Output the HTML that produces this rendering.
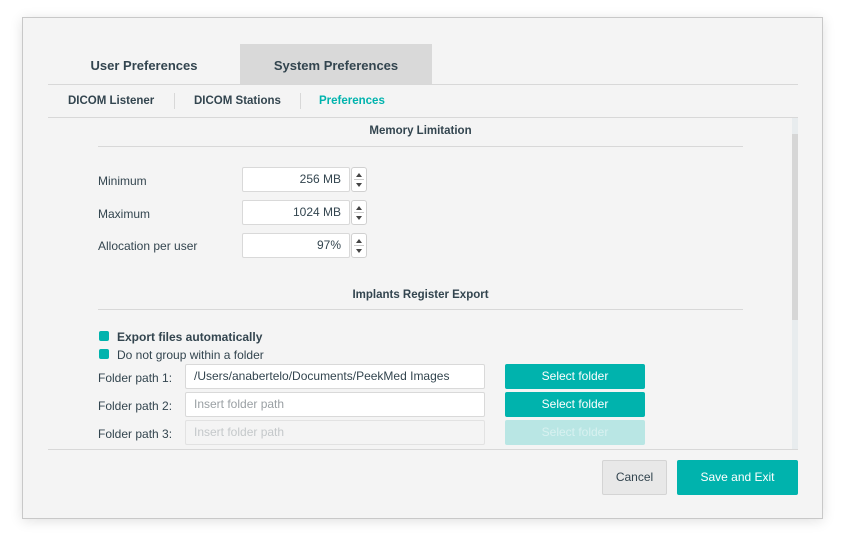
<!DOCTYPE html>
<html><head><meta charset="utf-8"><style>
*{box-sizing:border-box;margin:0;padding:0}
body{width:846px;height:546px;background:#fff;font-family:"Liberation Sans",sans-serif;color:#33454f;position:relative;overflow:hidden}
.dlg{position:absolute;left:22px;top:17px;width:801px;height:502px;background:#f4f4f4;border:1px solid #c8c8c8;box-shadow:0 2px 12px rgba(0,0,0,.12)}
.a{position:absolute}
.b{font-weight:bold}
.t{font-size:12px}
.hl{position:absolute;height:1px;background:#d8d8d8}
.inp{position:absolute;background:#fff;border:1px solid #d9d9d9;border-radius:2px;font-size:12px;height:25px;line-height:23px}
.num{text-align:right;padding-right:8px;width:108px}
.spin{position:absolute;width:16px;height:25px;background:#fff;border:1px solid #d0d0d0;border-radius:3px}
.spin:before{content:"";position:absolute;left:4px;top:5px;border:3px solid transparent;border-bottom:4px solid #444;border-top:0}
.spin:after{content:"";position:absolute;left:4px;top:15px;border:3px solid transparent;border-top:4px solid #444;border-bottom:0}
.spin i{position:absolute;left:2px;right:2px;top:11px;height:1px;background:#ccc}
.btn{position:absolute;background:#00b3ad;color:#fff;font-size:12px;text-align:center;border-radius:2px}
.cb{position:absolute;width:10px;height:10px;background:#00b3ad;border-radius:2px}
</style></head><body>
<div class="dlg">
  <div class="a" style="left:217px;top:26px;width:192px;height:41px;background:#d9d9d9"></div>
  <div class="a b" style="left:25px;top:40px;width:192px;text-align:center;font-size:13px">User Preferences</div>
  <div class="a b" style="left:217px;top:40px;width:192px;text-align:center;font-size:13px">System Preferences</div>
  <div class="hl" style="left:25px;top:66px;width:750px"></div>
  <div class="a b t" style="left:45px;top:77px;font-size:11.5px">DICOM Listener</div>
  <div class="a" style="left:151px;top:75px;width:1px;height:16px;background:#d8d8d8"></div>
  <div class="a b t" style="left:171px;top:77px;font-size:11.5px">DICOM Stations</div>
  <div class="a" style="left:277px;top:75px;width:1px;height:16px;background:#d8d8d8"></div>
  <div class="a b t" style="left:296px;top:77px;font-size:11.5px;color:#00b3ad">Preferences</div>
  <div class="hl" style="left:25px;top:99px;width:750px"></div>

  <div class="a" style="left:769px;top:100px;width:6px;height:331px;background:#e8ecee"></div>
  <div class="a" style="left:769px;top:116px;width:6px;height:186px;background:#d6d6d6"></div>

  <div class="a b t" style="left:75px;top:107px;width:645px;text-align:center;font-size:11.5px">Memory Limitation</div>
  <div class="hl" style="left:75px;top:128px;width:645px"></div>

  <div class="a t" style="left:75px;top:156px">Minimum</div>
  <div class="inp num" style="left:219px;top:149px">256 MB</div><div class="spin" style="left:328px;top:149px"><i></i></div>
  <div class="a t" style="left:75px;top:189px">Maximum</div>
  <div class="inp num" style="left:219px;top:182px">1024 MB</div><div class="spin" style="left:328px;top:182px"><i></i></div>
  <div class="a t" style="left:75px;top:221px">Allocation per user</div>
  <div class="inp num" style="left:219px;top:215px">97%</div><div class="spin" style="left:328px;top:215px"><i></i></div>

  <div class="a b t" style="left:75px;top:271px;width:645px;text-align:center;font-size:11.5px">Implants Register Export</div>
  <div class="hl" style="left:75px;top:291px;width:645px"></div>

  <div class="cb" style="left:76px;top:313px"></div>
  <div class="a b t" style="left:94px;top:312px">Export files automatically</div>
  <div class="cb" style="left:76px;top:331px"></div>
  <div class="a t" style="left:94px;top:330px">Do not group within a folder</div>

  <div class="a t" style="left:75px;top:353px">Folder path 1:</div>
  <div class="inp" style="left:162px;top:346px;width:300px;padding-left:8px">/Users/anabertelo/Documents/PeekMed Images</div>
  <div class="btn" style="left:482px;top:346px;width:140px;height:25px;line-height:25px">Select folder</div>
  <div class="a t" style="left:75px;top:381px">Folder path 2:</div>
  <div class="inp" style="left:162px;top:374px;width:300px;padding-left:8px;color:#9aa0a4">Insert folder path</div>
  <div class="btn" style="left:482px;top:374px;width:140px;height:25px;line-height:25px">Select folder</div>
  <div class="a t" style="left:75px;top:409px">Folder path 3:</div>
  <div class="inp" style="left:162px;top:402px;width:300px;padding-left:8px;color:#c4c8ca;background:#f4f4f4;border-color:#e2e2e2">Insert folder path</div>
  <div class="btn" style="left:482px;top:402px;width:140px;height:25px;line-height:25px;background:#b9e6e4;color:#d8f1f0">Select folder</div>

  <div class="hl" style="left:25px;top:431px;width:750px"></div>

  <div class="a t" style="left:579px;top:442px;width:65px;height:35px;line-height:33px;text-align:center;background:#e8e8e8;border:1px solid #d4d4d4;border-radius:2px">Cancel</div>
  <div class="btn" style="left:654px;top:442px;width:121px;height:35px;line-height:35px">Save and Exit</div>
</div>
</body></html>
